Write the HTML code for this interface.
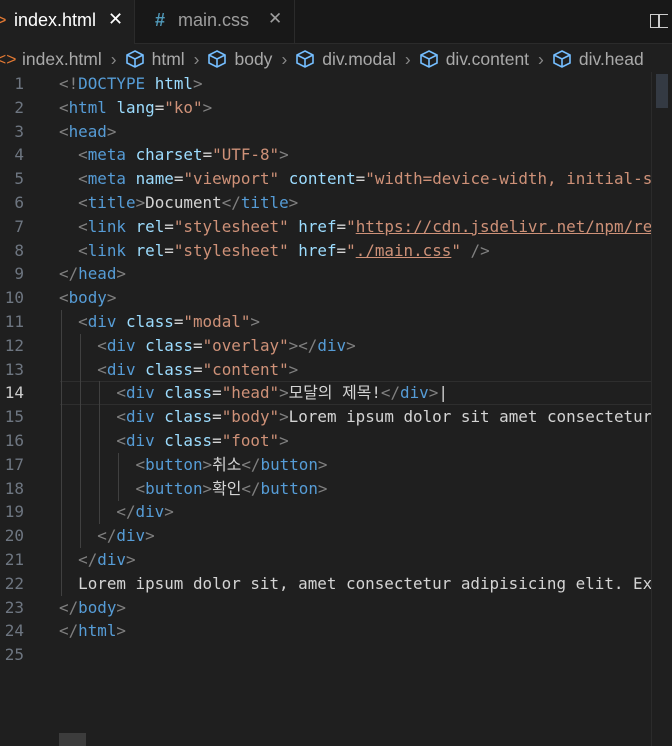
<!DOCTYPE html>
<html><head><meta charset="utf-8"><style>
body{margin:0;width:672px;height:746px;background:#1f1f1f;overflow:hidden;position:relative;font-family:"Liberation Sans","Noto Sans CJK KR",sans-serif}
.tabs{position:absolute;left:0;top:0;width:672px;height:43px;background:#181818;border-bottom:1px solid #2b2b2b}
.t1{position:absolute;left:0;top:0;width:134px;height:44px;background:#1f1f1f;color:#fff;font-size:18px}
.t2{position:absolute;left:134px;top:0;width:159px;height:43px;border-right:1px solid #2b2b2b;border-left:1px solid #2b2b2b;color:#9d9d9d;font-size:18px}
.crumb{position:absolute;top:49px;left:0;height:24px;color:#a9a9a9;font-size:17.5px;white-space:nowrap}
.sep{color:#888;margin:0 8px 0 9px}
.code{position:absolute;left:0;top:72px;width:651px;font-family:"DejaVu Sans Mono","Noto Sans CJK KR",monospace;font-size:15.9px;overflow:hidden;height:674px}
.ln{position:relative;height:23.8px;line-height:23.8px;white-space:pre}
.n{position:absolute;left:0;width:24px;text-align:right;color:#6e7681;font-size:16px}
.c{position:absolute;left:59px;color:#d4d4d4}
.p{color:#808080}.g{color:#569cd6}.a{color:#9cdcfe}.s{color:#ce9178}.u{text-decoration:underline}
.guide{position:absolute;width:1px;background:#404040}
.cube{display:inline-block;vertical-align:-3px;margin:0 7px 0 0}
</style></head><body>
<div class="tabs">
<div class="t1"><span style="position:absolute;left:-4px;top:10px;color:#e37933">&gt;</span><span style="position:absolute;left:14px;top:10px">index.html</span><span style="position:absolute;left:108px;top:9px;font-size:18px">✕</span></div>
<div class="t2"><span style="position:absolute;left:20px;top:10px;color:#519aba;font-weight:bold">#</span><span style="position:absolute;left:43px;top:10px">main.css</span><span style="position:absolute;left:133px;top:9px;font-size:17px">✕</span></div>
<div style="position:absolute;left:650px;top:14px;width:18px;height:14px;border:1.5px solid #ccc;border-right:none;box-sizing:border-box"></div><div style="position:absolute;left:658px;top:14px;width:1.5px;height:14px;background:#ccc"></div>
</div>
<div class="crumb">
<span style="position:absolute;left:-4px;color:#e37933">&lt;&gt;</span>
<span style="position:absolute;left:22px;top:0">index.html<span class="sep">›</span><svg class="cube" width="20" height="18" viewBox="0 0 20 18"><path d="M10 1L18 5V13L10 17L2 13V5Z M2 5L10 9L18 5 M10 9V17" fill="none" stroke="#75beff" stroke-width="1.6"/></svg>html<span class="sep">›</span><svg class="cube" width="20" height="18" viewBox="0 0 20 18"><path d="M10 1L18 5V13L10 17L2 13V5Z M2 5L10 9L18 5 M10 9V17" fill="none" stroke="#75beff" stroke-width="1.6"/></svg>body<span class="sep">›</span><svg class="cube" width="20" height="18" viewBox="0 0 20 18"><path d="M10 1L18 5V13L10 17L2 13V5Z M2 5L10 9L18 5 M10 9V17" fill="none" stroke="#75beff" stroke-width="1.6"/></svg>div.modal<span class="sep">›</span><svg class="cube" width="20" height="18" viewBox="0 0 20 18"><path d="M10 1L18 5V13L10 17L2 13V5Z M2 5L10 9L18 5 M10 9V17" fill="none" stroke="#75beff" stroke-width="1.6"/></svg>div.content<span class="sep">›</span><svg class="cube" width="20" height="18" viewBox="0 0 20 18"><path d="M10 1L18 5V13L10 17L2 13V5Z M2 5L10 9L18 5 M10 9V17" fill="none" stroke="#75beff" stroke-width="1.6"/></svg>div.head</span>
</div>
<div style="position:absolute;left:651px;top:72px;width:1px;height:674px;background:#2b2b2b"></div>
<div style="position:absolute;left:656px;top:74px;width:12px;height:34px;background:#4a5568;opacity:.5"></div>
<div style="position:absolute;left:60px;top:381px;width:591px;height:24px;border-top:1px solid #2e2e2e;border-bottom:1px solid #2e2e2e;box-sizing:border-box"></div>
<div class="guide" style="left:80px;top:334px;height:214px"></div>
<div class="guide" style="left:99px;top:381px;height:143px"></div>
<div class="guide" style="left:118px;top:453px;height:48px"></div>
<div class="guide" style="left:61px;top:310px;height:286px"></div>
<div style="position:absolute;left:59px;top:733px;width:27px;height:13px;background:#3c3c3c"></div>
<div class="code">
<div class="ln"><span class="n">1</span><span class="c"><span class="p">&lt;!</span><span class="g">DOCTYPE</span> <span class="a">html</span><span class="p">&gt;</span></span></div>
<div class="ln"><span class="n">2</span><span class="c"><span class="p">&lt;</span><span class="g">html</span> <span class="a">lang</span>=<span class="s">"ko"</span><span class="p">&gt;</span></span></div>
<div class="ln"><span class="n">3</span><span class="c"><span class="p">&lt;</span><span class="g">head</span><span class="p">&gt;</span></span></div>
<div class="ln"><span class="n">4</span><span class="c">  <span class="p">&lt;</span><span class="g">meta</span> <span class="a">charset</span>=<span class="s">"UTF-8"</span><span class="p">&gt;</span></span></div>
<div class="ln"><span class="n">5</span><span class="c">  <span class="p">&lt;</span><span class="g">meta</span> <span class="a">name</span>=<span class="s">"viewport"</span> <span class="a">content</span>=<span class="s">"width=device-width, initial-scale=1.0"</span></span></div>
<div class="ln"><span class="n">6</span><span class="c">  <span class="p">&lt;</span><span class="g">title</span><span class="p">&gt;</span>Document<span class="p">&lt;/</span><span class="g">title</span><span class="p">&gt;</span></span></div>
<div class="ln"><span class="n">7</span><span class="c">  <span class="p">&lt;</span><span class="g">link</span> <span class="a">rel</span>=<span class="s">"stylesheet"</span> <span class="a">href</span>=<span class="s">"<span class="u">https://cdn.jsdelivr.net/npm/reset-css</span>"</span></span></div>
<div class="ln"><span class="n">8</span><span class="c">  <span class="p">&lt;</span><span class="g">link</span> <span class="a">rel</span>=<span class="s">"stylesheet"</span> <span class="a">href</span>=<span class="s">"<span class="u">./main.css</span>"</span> <span class="p">/&gt;</span></span></div>
<div class="ln"><span class="n">9</span><span class="c"><span class="p">&lt;/</span><span class="g">head</span><span class="p">&gt;</span></span></div>
<div class="ln"><span class="n">10</span><span class="c"><span class="p">&lt;</span><span class="g">body</span><span class="p">&gt;</span></span></div>
<div class="ln"><span class="n">11</span><span class="c">  <span class="p">&lt;</span><span class="g">div</span> <span class="a">class</span>=<span class="s">"modal"</span><span class="p">&gt;</span></span></div>
<div class="ln"><span class="n">12</span><span class="c">    <span class="p">&lt;</span><span class="g">div</span> <span class="a">class</span>=<span class="s">"overlay"</span><span class="p">&gt;&lt;/</span><span class="g">div</span><span class="p">&gt;</span></span></div>
<div class="ln"><span class="n">13</span><span class="c">    <span class="p">&lt;</span><span class="g">div</span> <span class="a">class</span>=<span class="s">"content"</span><span class="p">&gt;</span></span></div>
<div class="ln"><span class="n" style="color:#ccc">14</span><span class="c">      <span class="p">&lt;</span><span class="g">div</span> <span class="a">class</span>=<span class="s">"head"</span><span class="p">&gt;</span>모달의 제목!<span class="p">&lt;/</span><span class="g">div</span><span class="p">&gt;</span>|</span></div>
<div class="ln"><span class="n">15</span><span class="c">      <span class="p">&lt;</span><span class="g">div</span> <span class="a">class</span>=<span class="s">"body"</span><span class="p">&gt;</span>Lorem ipsum dolor sit amet consectetur adipisicing</span></div>
<div class="ln"><span class="n">16</span><span class="c">      <span class="p">&lt;</span><span class="g">div</span> <span class="a">class</span>=<span class="s">"foot"</span><span class="p">&gt;</span></span></div>
<div class="ln"><span class="n">17</span><span class="c">        <span class="p">&lt;</span><span class="g">button</span><span class="p">&gt;</span>취소<span class="p">&lt;/</span><span class="g">button</span><span class="p">&gt;</span></span></div>
<div class="ln"><span class="n">18</span><span class="c">        <span class="p">&lt;</span><span class="g">button</span><span class="p">&gt;</span>확인<span class="p">&lt;/</span><span class="g">button</span><span class="p">&gt;</span></span></div>
<div class="ln"><span class="n">19</span><span class="c">      <span class="p">&lt;/</span><span class="g">div</span><span class="p">&gt;</span></span></div>
<div class="ln"><span class="n">20</span><span class="c">    <span class="p">&lt;/</span><span class="g">div</span><span class="p">&gt;</span></span></div>
<div class="ln"><span class="n">21</span><span class="c">  <span class="p">&lt;/</span><span class="g">div</span><span class="p">&gt;</span></span></div>
<div class="ln"><span class="n">22</span><span class="c">  Lorem ipsum dolor sit, amet consectetur adipisicing elit. Explicabo</span></div>
<div class="ln"><span class="n">23</span><span class="c"><span class="p">&lt;/</span><span class="g">body</span><span class="p">&gt;</span></span></div>
<div class="ln"><span class="n">24</span><span class="c"><span class="p">&lt;/</span><span class="g">html</span><span class="p">&gt;</span></span></div>
<div class="ln"><span class="n">25</span></div>
</div>
</body></html>
